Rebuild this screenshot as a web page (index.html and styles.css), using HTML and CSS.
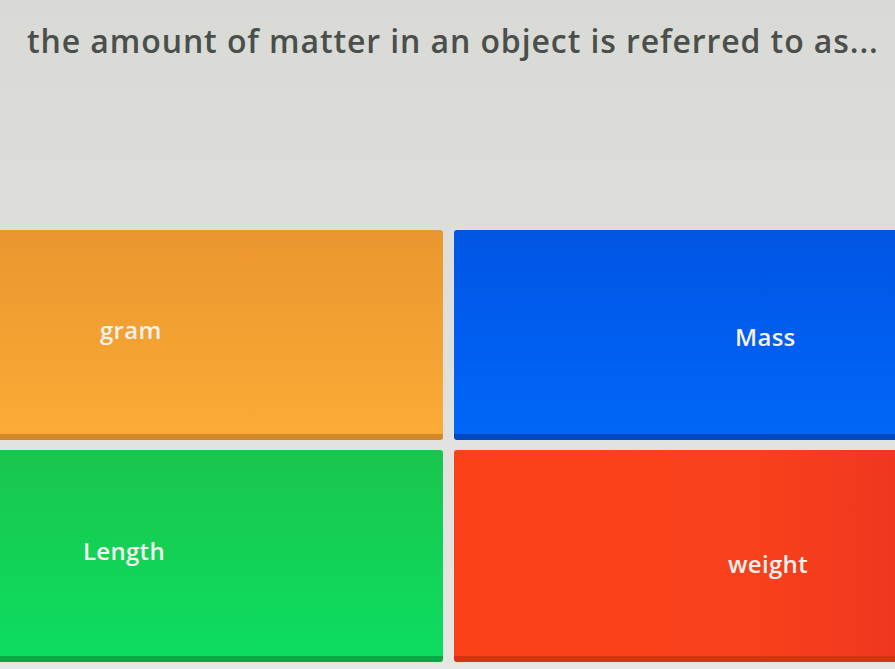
FILE: index.html
```html
<!DOCTYPE html>
<html>
<head>
<meta charset="utf-8">
<link rel="stylesheet" href="styles.css">
</head>
<body>
<div class="page">
  <header class="question">the amount of matter in an object is referred to as...</header>
  <main class="answers">
    <div class="tile orange"><span class="label l-gram">gram</span></div>
    <div class="tile blue"><span class="label l-mass">Mass</span></div>
    <div class="tile green"><span class="label l-length">Length</span></div>
    <div class="tile red"><span class="label l-weight">weight</span></div>
  </main>
</div>
</body>
</html>
```
FILE: styles.css
```css
html, body {
  margin: 0;
  padding: 0;
}
body {
  background: #dcdcd7;
  font-family: "Open Sans", "Liberation Sans", sans-serif;
  width: 895px;
  height: 669px;
  overflow: hidden;
}
.page {
  display: flex;
  flex-direction: column;
  height: 669px;
  background: linear-gradient(180deg, #d9dad5 0%, #e0e0dc 60%, #e6e6e2 100%);
}
.question {
  height: 230px;
  box-sizing: border-box;
  padding: 19px 0 0 27px;
  font-size: 32px;
  font-weight: 600;
  color: #4a4f4c;
  letter-spacing: 0.9px;
  white-space: nowrap;
}
.answers {
  display: grid;
  grid-template-columns: 443px 1fr;
  grid-template-rows: 210px 212px;
  column-gap: 11px;
  row-gap: 10px;
}
.tile {
  display: flex;
  align-items: center;
  box-sizing: border-box;
  border-radius: 3px;
  border-bottom: 6px solid;
}
.label {
  color: #f4f1ee;
  font-size: 24px;
  font-weight: 600;
  letter-spacing: 0.3px;
}
.orange {
  background: linear-gradient(180deg, #ea962f 0%, #f3a232 55%, #fbab36 100%);
  border-bottom-color: #d0882c;
  border-radius: 0 3px 3px 0;
}
.blue {
  background: linear-gradient(180deg, #0155e3 0%, #005ef0 55%, #0066f6 100%);
  border-bottom-color: #0049c0;
  border-radius: 3px 0 0 3px;
}
.green {
  background: linear-gradient(180deg, #1ac54d 0%, #12d357 55%, #0ddd60 100%);
  border-bottom-color: #0aa844;
  border-radius: 0 3px 3px 0;
}
.red {
  background: linear-gradient(90deg, #fb4118 0%, #f8401b 70%, #ef3720 100%);
  border-bottom-color: #d23415;
  border-radius: 3px 0 0 3px;
}
.l-gram {
  margin: -6px 0 0 100px;
}
.l-mass {
  margin: 8px 0 0 281px;
}
.l-length {
  margin: -6px 0 0 83px;
}
.l-weight {
  margin: 20px 0 0 274px;
}
```
